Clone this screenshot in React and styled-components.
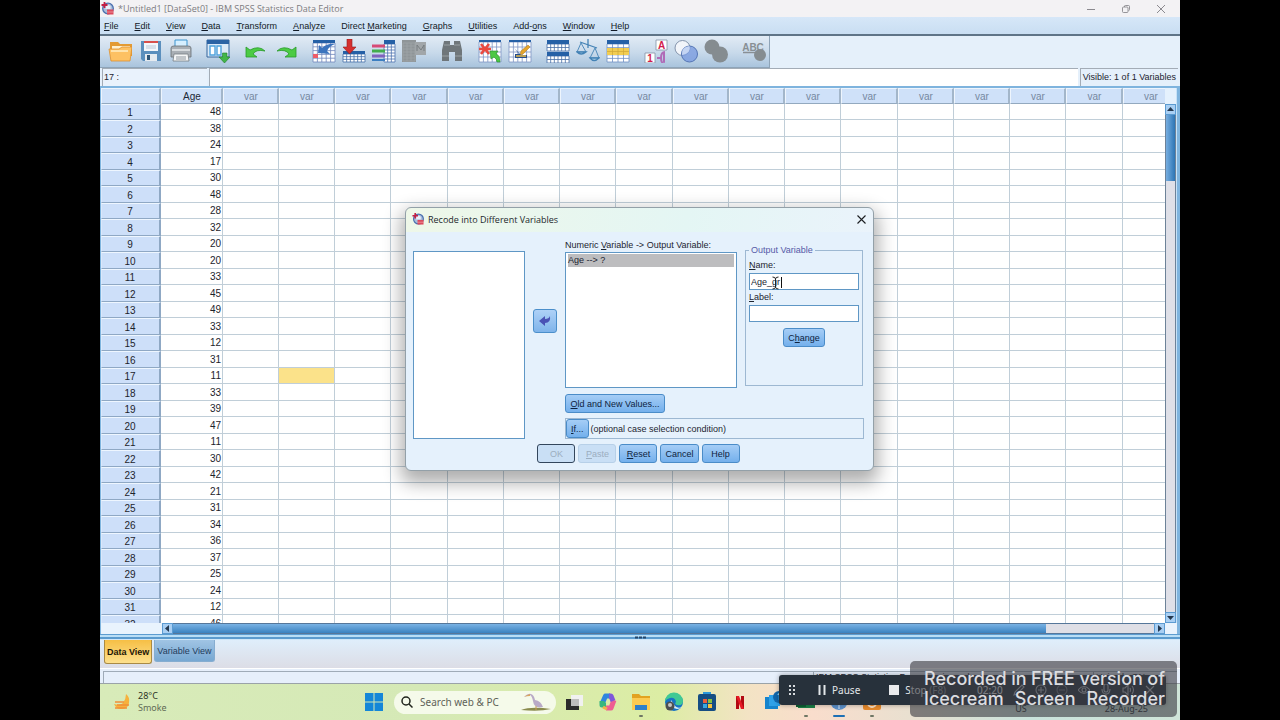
import React from "react";
import styled, { createGlobalStyle, css } from "styled-components";

const Global = createGlobalStyle`
  *, *::before, *::after { box-sizing: border-box; }
  html, body { margin: 0; background: #000; }
  body { font-family: "Liberation Sans", Arial, sans-serif; font-size: 9px; color: #1c2430; }
  button, input { font: inherit; color: inherit; margin: 0; padding: 0; border: 0; background: none; }
  svg { display: block; }
`;

const UI = `"Noto Sans", "Open Sans", sans-serif`;
const TITLE = `"Open Sans", "Noto Sans", sans-serif`;

const Screen = styled.div`
  height: 100vh;
  padding: 0 100px;
  background: #000;
`;
const Desktop = styled.div`
  position: relative;
  height: 100%;
  display: flex;
  flex-direction: column;
  overflow: hidden;
  background: #e6f1fb;
`;

/* ---------- application window ---------- */
const TitleBar = styled.header`
  display: flex;
  align-items: center;
  gap: 4px;
  height: 17px;
  padding: 0 13px 0 1px;
  background: #f3f2f4;
  color: #7c7b80;
  font-family: ${TITLE};
  font-size: 9px;
`;
const Title = styled.h1`
  flex: 1;
  margin: 0;
  font-size: inherit;
  font-weight: 400;
`;
const Controls = styled.div`
  display: flex;
  gap: 23px;
  color: #8b8a8f;
`;
const IconButton = styled.button`
  display: grid;
  place-items: center;
  width: ${(p) => p.$w || 12}px;
  height: ${(p) => p.$h || 12}px;
`;
const MenuBar = styled.nav`
  display: flex;
  gap: 16px;
  align-items: center;
  height: 19px;
  padding-left: 4px;
  background: linear-gradient(#d6e7f8, #c9def2);
  border-bottom: 2px solid #5f7487;
  color: #121a26;
`;
const MenuItem = styled.button`
  line-height: 16px;
`;
const ToolStrip = styled.div`
  display: flex;
  height: 32px;
  background: #e5f0fa;
`;
const ToolBar = styled.div`
  display: flex;
  align-items: center;
  gap: 14px;
  padding: 0 3px 2px 8px;
  background: linear-gradient(#e2ebf5, #c7d9ea 55%, #a9c4dd);
  border-right: 1px solid #8ea4b8;
  border-bottom: 1px solid #8ea4b8;
`;
const ToolGroup = styled.div`
  display: flex;
  gap: 6px;
`;
const InfoRow = styled.div`
  display: flex;
  height: 18px;
  padding: 0 2px;
  gap: 2px;
  background: #e5f0fb;
  line-height: 17px;
`;
const CellName = styled.output`
  width: 105px;
  padding-left: 1px;
  border: 1px solid #a3acb6;
  border-width: 1px 0 0 1px;
  background: #e9f2fc;
`;
const CellEditor = styled.input`
  flex: 1;
  min-width: 0;
  background: #fff;
  border: 1px solid #a3acb6;
  border-width: 1px 0 0 1px;
`;
const Visible = styled.span`
  padding: 0 2px 0 2px;
  border: 1px solid #a3acb6;
  border-width: 1px 0 0 1px;
`;

/* ---------- data grid ---------- */
const GridFrame = styled.main`
  flex: 1;
  min-height: 0;
  display: flex;
  flex-direction: column;
  border: solid #7fb4de;
  border-width: 2px 3px 0 1px;
  background: #fff;
`;
const GridBody = styled.div`
  flex: 1;
  min-height: 0;
  display: flex;
`;
const Viewport = styled.div`
  flex: 1;
  min-width: 0;
  overflow: hidden;
`;
const Sheet = styled.table`
  table-layout: fixed;
  width: 1078px;
  border-collapse: separate;
  border-spacing: 0;
  font-size: 10px;
  color: #1d242c;
`;
const ColHead = styled.th`
  height: 16px;
  padding: 1px 0 0 1px;
  line-height: 13px;
  font-weight: 400;
  color: ${(p) => (p.$named ? "#1d2836" : "#7688a0")};
  background: #cfe1f9;
  border: 1px solid #eef5fd;
  border-right: 2px solid #a3b6ca;
  border-bottom: 1px solid #93a9bf;
`;
const RowHead = styled.th`
  padding: 1px 1px 0 0;
  line-height: 13px;
  font-weight: 400;
  background: #cddff9;
  border: 1px solid #8fa8c4;
  border-top-color: #eef6ff;
  border-right-width: 2px;
  border-left-color: #dbe9fb;
`;
const Row = styled.tr`
  height: 16px;
  &:nth-child(even) { height: 17px; }
`;
const Cell = styled.td`
  padding: 1px 1px 0 0;
  line-height: 14px;
  text-align: right;
  border: solid #c0ced8;
  border-width: 0 1px 1px 0;
  background: ${(p) => (p.$active ? "#fbe28a" : "#fff")};
`;
const VBar = styled.div`
  display: flex;
  flex-direction: column;
  width: 12px;
  padding-top: 16px;
  background: #e5f1fd;
  border-right: 1px solid #c7e2f8;
`;
const Arrow = styled.button`
  display: grid;
  place-items: center;
  flex: none;
  width: 11px;
  height: 11px;
  background: #a9cff3;
  border: 1px solid #5c9bd1;
  color: #24384f;
`;
const VTrack = styled.div`
  flex: 1;
  background: #dfe0e8;
  border: 1px solid #6d8298;
  border-width: 0 1px;
`;
const VThumb = styled.div`
  height: 66px;
  background: linear-gradient(90deg, #77aee0, #2d75b5);
`;
const HRow = styled.div`
  display: flex;
  height: 11px;
  padding: 0 12px 0 61px;
  background: #e9f3fd;
`;
const HTrack = styled.div`
  flex: 1;
  background: #dfdfe6;
  border: 1px solid #56779a;
  border-width: 1px 0;
`;
const HThumb = styled.div`
  width: 89%;
  height: 100%;
  background: linear-gradient(#79b2e4, #3a82c0);
`;
const Splitter = styled.div`
  display: grid;
  place-items: center;
  height: 6px;
  background: linear-gradient(#5c9cd0 0 1px, #b9def6 1px 3px, #5b9bce 3px 5px, #cfe6f8 5px);
`;
const TabStrip = styled.div`
  display: flex;
  align-items: flex-start;
  gap: 2px;
  height: 28px;
  padding: 0 4px;
  background: linear-gradient(#dfeefb, #dcdde6);
`;
const Tab = styled.button`
  height: ${(p) => (p.$on ? 24 : 22)}px;
  padding: 0 2px;
  border: 1px solid ${(p) => (p.$on ? "#a98a45" : "#86add0")};
  border-top: 0;
  border-radius: 0 0 3px 3px;
  background: ${(p) => (p.$on ? "linear-gradient(#f6bf45, #fde08d)" : "linear-gradient(#a0c4e4, #78a8d2)")};
  color: ${(p) => (p.$on ? "#1d1608" : "#1f3c5c")};
  font-weight: ${(p) => (p.$on ? 700 : 400)};
`;
const StatusBar = styled.footer`
  display: flex;
  height: 16px;
  padding: 2px 3px 0;
  border-top: 1px solid #fff;
  border-bottom: 1px solid #9aa3a8;
  background: #e6effb;
`;
const StatusCell = styled.span`
  flex: ${(p) => p.$flex};
  padding-left: 2px;
  line-height: 11px;
  border: 1px solid #9fabb8;
  border-width: 1px 0 0 1px;
  white-space: nowrap;
  overflow: hidden;
`;

/* ---------- dialog ---------- */
const Dialog = styled.section`
  position: absolute;
  left: calc(50% - 235px);
  top: 207px;
  width: 469px;
  padding-bottom: 7px;
  border: 1px solid #93a0a8;
  border-radius: 6px;
  background: linear-gradient(100deg, #eef7e8, #e4f6f4 60%, #eaf3fb) top / 100% 24px no-repeat, #e5f1fc;
  box-shadow: 0 8px 18px 4px rgba(0, 0, 0, 0.32);
`;
const DialogTitle = styled.div`
  display: flex;
  align-items: center;
  gap: 4px;
  height: 22px;
  padding: 0 6px;
  color: #23282c;
  font-family: ${TITLE};
  font-size: 9px;
`;
const DialogMain = styled.div`
  display: flex;
  gap: 8px;
  padding: 9px 9px 0 7px;
`;
const SourceList = styled.div`
  width: 112px;
  margin-top: 12px;
  background: #fff;
  border: 1px solid #5f97c5;
`;
const MoveButton = styled.button`
  display: grid;
  place-items: center;
  align-self: center;
  width: 24px;
  height: 24px;
  margin-bottom: 36px;
  border: 1px solid #4b8fcb;
  border-radius: 3px;
  background: linear-gradient(#aed1f7, #7fb4ea);
  color: #4a52b5;
`;
const RightSide = styled.div`
  flex: 1;
  min-width: 0;
`;
const Targets = styled.div`
  display: flex;
  gap: 8px;
  height: 149px;
`;
const TargetCol = styled.div`
  display: flex;
  flex-direction: column;
  width: 172px;
  line-height: 13px;
  white-space: nowrap;
`;
const TargetList = styled.ul`
  flex: 1;
  margin: 0;
  padding: 1px 2px;
  list-style: none;
  background: #fff;
  border: 1px solid #5f97c5;
`;
const TargetItem = styled.li`
  background: #bdbdbf;
`;
const Output = styled.fieldset`
  width: 118px;
  min-width: 0;
  margin: 5px 0 2px;
  padding: 2px 3px 0 3px;
  border: 1px solid #9db8d2;
  display: flex;
  flex-direction: column;
`;
const Legend = styled.legend`
  padding: 0 2px;
  line-height: 12px;
  color: #565aa8;
`;
const FieldLabel = styled.label`
  line-height: 15px;
`;
const Field = styled.input`
  height: 17px;
  padding: 0 1px;
  background: #fff;
  border: 1px solid #5f97c5;
`;
const Button = styled.button`
  height: 19px;
  min-width: ${(p) => p.$min || 0}px;
  padding: 0 4px;
  border: 1px solid #4a8cc8;
  border-radius: 3px;
  background: linear-gradient(#a5cdf6, #74b0ec);
  color: #0e2340;
  white-space: nowrap;
  ${(p) => p.disabled && css`
    background: #c9dff5;
    border-color: #b7d0e8;
    color: #9caec0;
  `}
  ${(p) => p.$default && css`
    border-color: #33465c;
  `}
`;
const ChangeRow = styled.div`
  display: flex;
  justify-content: center;
  padding-top: 6px;
`;
const OldNewRow = styled.div`
  padding-top: 6px;
`;
const Condition = styled.div`
  display: flex;
  align-items: center;
  gap: 2px;
  height: 21px;
  margin-top: 5px;
  border: 1px solid #9db8d2;
`;
const DialogButtons = styled.div`
  display: flex;
  justify-content: center;
  gap: 3px;
  padding: 5px 2px 0 0;
`;
const TextCursor = styled.svg`
  position: absolute;
  left: 365px;
  top: 68px;
`;

/* ---------- task bar ---------- */
const TaskBar = styled.footer`
  display: flex;
  align-items: center;
  height: 36px;
  padding: 0 12px;
  background: linear-gradient(90deg, #d8ebb9 0%, #d5e9b6 30%, #dceda4 52%, #f3e3c4 60%, #f9ddcc 66%, #e9e0d0 75%, #c9e3dc 86%, #cfe5d8 100%);
  font-family: ${UI};
`;
const Weather = styled.button`
  display: flex;
  align-items: center;
  gap: 6px;
  width: 251px;
  text-align: left;
  line-height: 12px;
  color: #2c3325;
`;
const Sub = styled.span`
  display: block;
  color: #616a56;
`;
const Apps = styled.div`
  flex: 1;
  display: flex;
  align-items: center;
  gap: 11px;
`;
const Search = styled.label`
  display: flex;
  align-items: center;
  gap: 7px;
  width: 162px;
  height: 23px;
  padding: 0 5px 0 7px;
  margin: 0 -3px 0 -2px;
  border-radius: 12px;
  background: #f5faea;
`;
const SearchInput = styled.input`
  flex: 1;
  min-width: 0;
  font-size: 10px;
  &::placeholder { color: #5e6258; opacity: 1; }
`;
const AppButton = styled.button`
  position: relative;
  width: 22px;
  height: 28px;
  display: grid;
  place-items: center;
  &::after {
    content: "";
    position: absolute;
    bottom: -1px;
    left: calc(50% - ${(p) => (p.$run === "active" ? 6 : 2)}px);
    width: ${(p) => (p.$run === "active" ? 12 : 4)}px;
    height: 2px;
    border-radius: 1px;
    background: ${(p) => (p.$run === "active" ? "#1c6fb5" : p.$run ? "#6f7765" : "transparent")};
  }
`;
const Tray = styled.div`
  display: flex;
  align-items: flex-end;
  gap: 78px;
  height: 25px;
  padding-right: 20px;
  line-height: 12px;
  color: #20262a;
`;

/* ---------- recorder overlay ---------- */
const Recorder = styled.aside`
  position: absolute;
  right: 14px;
  bottom: 15px;
  width: 387px;
  height: 30px;
  display: flex;
  align-items: center;
  padding: 0 10px;
  border-radius: 3px;
  background: #27313b;
  box-shadow: 0 0 5px rgba(0, 0, 0, 0.35);
  color: #e3e7ea;
  font-family: ${UI};
  font-size: 10px;
`;
const RecButton = styled.button`
  display: flex;
  align-items: center;
  gap: 6px;
  margin-left: ${(p) => p.$gap}px;
`;
const Dim = styled.span`
  color: #8b939a;
`;
const RecTime = styled.time`
  margin-left: 31px;
`;
const RecTools = styled.div`
  display: flex;
  flex: 1;
  justify-content: space-between;
  margin-left: 10px;
`;
const Watermark = styled.p`
  position: absolute;
  right: 3px;
  bottom: 3px;
  width: 267px;
  margin: 0;
  padding: 8px 12px 8px 14px;
  border-radius: 5px;
  background: rgba(62, 62, 68, 0.62);
  color: #dcdde0;
  font-family: Inter, sans-serif;
  font-size: 18px;
  font-weight: 500;
  line-height: 20px;
`;
const MarkLine = styled.span`
  display: flex;
  justify-content: space-between;
  white-space: nowrap;
`;

/* ---------- drawings ---------- */
const SpssLogo = ({ size = 13 }) => (
  <svg width={size} height={size} viewBox="0 0 13 13">
    <circle cx="7" cy="6.500" r="5.300" fill="#a9bedd" stroke="#4a6fae" strokeWidth="1.300" />
    <path d="M4.500 4q2-2 5 0v3h-5z" fill="#e8eff8" />
    <path d="M3.500 0v6M.5 3h6" stroke="#c41f45" strokeWidth="1.800" />
    <rect x="6" y="7.500" width="6.500" height="5" fill="#dc4a5c" />
    <path d="M6 10h6.500" stroke="#f0b9c1" strokeWidth=".6" />
  </svg>
);
const Lines = ({ x, y, w, h, n = 4, m = 4, color = "#8fa6d0" }) => {
  const d = [];
  for (let i = 0; i <= n; i++) d.push(`M${x + (w * i) / n} ${y}v${h}`);
  for (let j = 0; j <= m; j++) d.push(`M${x} ${y + (h * j) / m}h${w}`);
  return <path d={d.join("")} stroke={color} strokeWidth=".8" fill="none" />;
};
const GridBase = ({ x = 1, y = 1, w = 22, h = 22, head = 4, n = 5, m = 4, line }) => (
  <g>
    <rect x={x} y={y} width={w} height={h} fill="#fff" />
    <Lines x={x} y={y + head} w={w} h={h - head} n={n} m={m} color={line} />
    <rect x={x} y={y} width={w} height={head} fill="#2560a6" />
  </g>
);
const icons = {
  "Open data document": (
    <g>
      <path d="M2 3h8l2 2h12v12H2z" fill="#e39a33" />
      <path d="M4 7h18v5H4z" fill="#fff1cf" />
      <path d="M1 10h10l3-2h10l-2 14H3z" fill="#fdc163" stroke="#dd9130" strokeWidth=".8" />
      <path d="M3 12h17" stroke="#ffe3ab" strokeWidth="2" />
    </g>
  ),
  "Save this document": (
    <g>
      <path d="M3 2h20v20H5l-2-2z" fill="#5b8fbd" />
      <path d="M6 2h14v10H6z" fill="#f3f6fa" />
      <path d="M6 2h14v2H6z" fill="#d8504c" />
      <path d="M8 7h10M8 9h10" stroke="#b9c8d8" />
      <path d="M7 15h12v7H7z" fill="#e6ebf0" />
      <path d="M9 16h3v5H9z" fill="#2f5678" />
    </g>
  ),
  Print: (
    <g>
      <path d="M7 1h12v9H7z" fill="#d6efff" stroke="#3b94cf" />
      <path d="M3 9q0-2 3-2h14q3 0 3 2v9H3z" fill="#a9afb5" stroke="#686e74" strokeWidth=".8" />
      <path d="M4 11h18" stroke="#e8ebee" strokeWidth="1.500" />
      <path d="M6 15h14l1 7H5z" fill="#f4f5f6" stroke="#777d83" strokeWidth=".8" />
      <path d="M8 18h10M8 20h10" stroke="#8f979e" />
    </g>
  ),
  "Recall recently used dialogs": (
    <g>
      <path d="M1 1h22v17H1z" fill="#dbe9f7" stroke="#32659c" />
      <path d="M1 1h22v4H1z" fill="#2b63a4" />
      <path d="M4 7h5v9H4zM11 7h4v9h-4z" fill="#fff" stroke="#4fa2dc" strokeWidth="1.400" />
      <path d="M16.500 14h4.500v4h3l-5.500 6-5.500-6h3.500z" fill="#43b649" stroke="#227c2c" strokeWidth=".6" />
    </g>
  ),
  Undo: <path d="M2 8v10h11l-4-3q3-5 12-3-6-6-15-1z" fill="#4ccb44" stroke="#2a9a2c" strokeWidth=".8" />,
  Redo: <path d="M22 8v10H11l4-3q-3-5-12-3 6-6 15-1z" fill="#4ccb44" stroke="#2a9a2c" strokeWidth=".8" />,
  "Go to case": (
    <g>
      <GridBase head={3} n={5} m={5} line="#7087bb" />
      <rect x="1" y="15" width="5" height="4" fill="#ee5c68" />
      <path d="M6 14l1-8 3 3q6-5 13-4-6 2-8 7l3 3z" fill="#3b73bd" />
    </g>
  ),
  "Go to variable": (
    <g>
      <GridBase y={12} h={11} head={3} n={6} m={3} line="#446fa8" />
      <path d="M5 0h5v8h4l-6.500 7L1 8h4z" fill="#d52f2f" stroke="#941c1c" strokeWidth=".6" />
    </g>
  ),
  Variables: (
    <g>
      <GridBase x={12} w={11} n={3} m={6} line="#4c72ae" />
      <path d="M0 7h13" stroke="#d64b77" strokeWidth="3" />
      <path d="M0 12h13" stroke="#43ad4d" strokeWidth="3" />
      <path d="M0 17h13" stroke="#8163bd" strokeWidth="3" />
      <path d="M0 21h13" stroke="#3c7fc2" strokeWidth="2" />
    </g>
  ),
  "Run descriptive statistics": (
    <g>
      <path d="M0 1h14v22H0z" fill="#8f9598" />
      <path d="M13 3h11v13H13z" fill="#a1a6a9" />
      <Lines x={1} y={4} w={12} h={18} n={3} m={6} color="#9ea4a7" />
      <path d="M15 12V6l4 5 3-5v6" stroke="#777d80" fill="none" />
    </g>
  ),
  Find: (
    <g fill="#6f767a">
      <path d="M4 2h6v4h4V2h6l2 9v11h-7v-9H9v9H2V11z" />
      <path d="M4 6h6M14 6h6M2 17h7M15 17h7" stroke="#9aa0a3" />
    </g>
  ),
  "Insert cases": (
    <g>
      <GridBase head={2} line="#7d95c4" />
      <path d="M1 10h12M3 5l8 10M11 5L3 15" stroke="#ea4a40" strokeWidth="2.600" />
      <path d="M12 12l1 8 3-2q3 2 3 5h3q0-7-4-8l2-3z" fill="#4cc845" stroke="#279129" strokeWidth=".6" />
    </g>
  ),
  "Insert variable": (
    <g>
      <GridBase head={2} line="#7d95c4" />
      <path d="M13 12l7-6 2 2-7 7-3 1z" fill="#e6a62c" stroke="#a8741b" strokeWidth=".5" />
      <path d="M6 9l5 6H7v4h12v-3h-6z" fill="#254d8d" />
      <path d="M8 17h10" stroke="#e9bd4a" strokeWidth="1.500" />
    </g>
  ),
  "Split file": (
    <g>
      <GridBase h={11} n={6} m={2} line="#4970a7" />
      <GridBase y={13} h={11} n={6} m={2} line="#4970a7" />
    </g>
  ),
  "Weight cases": (
    <g fill="none" stroke="#4382b5" strokeWidth="1.300">
      <path d="M4 3l17 6M12 0v9" />
      <path d="M5 4L1 13h9zM19 9l-5 10h9z" strokeWidth=".9" />
      <path d="M1 13q4 4 9 0zM14 19q4 5 9 0z" fill="#b9d8ef" />
    </g>
  ),
  "Select cases": (
    <g>
      <GridBase n={4} m={5} line="#6f8fc4" />
      <rect x="1" y="9" width="22" height="7" fill="#f2cd52" />
      <path d="M1 12.500h22M6.500 9v7M12 9v7M17.500 9v7" stroke="#cfa637" strokeWidth=".7" />
    </g>
  ),
  "Value labels": (
    <g>
      <path d="M12 1h11v10H12zM1 14h10v10H1z" fill="#fff" stroke="#8492a4" strokeWidth=".8" />
      <text x="17.500" y="10" textAnchor="middle" fontSize="10" fontWeight="700" fill="#d31c4c">A</text>
      <text x="6" y="22.500" textAnchor="middle" fontSize="10" fontWeight="700" fill="#d31c4c">1</text>
      <path d="M13 19h4M21 13q-4 0-4 6t4 5M20 14v9" stroke="#b06bb7" strokeWidth="2" fill="none" />
    </g>
  ),
  "Use variable sets": (
    <g strokeWidth="1">
      <circle cx="8.500" cy="9" r="7.500" fill="#f2f5fa" stroke="#8494ac" />
      <circle cx="15.500" cy="15" r="8" fill="#7c9ce0" fillOpacity=".8" stroke="#5576b5" />
      <path d="M8 16Q7 8 15.500 7q2 7-7.500 9z" fill="#c5d5f3" />
    </g>
  ),
  "Show all variables": (
    <g fill="#858c90">
      <circle cx="8" cy="8" r="7.500" />
      <circle cx="16" cy="15.500" r="8" />
    </g>
  ),
  "Spell check": (
    <g>
      <text x="11" y="12" textAnchor="middle" fontSize="10" fontWeight="700" fill="#888f94">ABC</text>
      <path d="M1 13.500h13" stroke="#888f94" strokeWidth="1.500" />
      <circle cx="18" cy="16" r="6" fill="#858c90" />
    </g>
  ),
};
const groups = [
  ["Open data document", "Save this document", "Print"],
  ["Recall recently used dialogs"],
  ["Undo", "Redo"],
  ["Go to case", "Go to variable", "Variables", "Run descriptive statistics"],
  ["Find"],
  ["Insert cases", "Insert variable"],
  ["Split file", "Weight cases", "Select cases"],
  ["Value labels", "Use variable sets", "Show all variables"],
  ["Spell check"],
];
const Tri = ({ dir }) => (
  <svg width="7" height="7" viewBox="0 0 7 7">
    <path d="M0 5l3.500-4L7 5z" fill="currentColor" transform={`rotate(${dir} 3.500 3.500)`} />
  </svg>
);

const taskApps = [
  ["Task view", null, <g><path d="M2 8h13v11H2z" fill="#2b2b2b" /><path d="M7 4h12v11H7z" fill="#f1f1f1" /><path d="M7 8h8v7H7z" fill="#bdbdbd" /></g>],
  ["Copilot", null, (
    <g fill="none" strokeWidth="5" strokeLinejoin="round">
      <path d="M13 5H8.500L5 13" stroke="#2e86de" />
      <path d="M5 10v4h4" stroke="#39b77d" />
      <path d="M9 17h5l3-8" stroke="#ee5f92" />
      <path d="M12 5h2l2 5" stroke="#7f57d9" />
      <path d="M6 16l4 2" stroke="#f2b04a" strokeWidth="3" />
    </g>
  )],
  ["File Explorer", "idle", <g><path d="M2 3h7l2 2h9v14H2z" fill="#e2a321" /><path d="M2 7h18v12H2z" fill="#fccb52" /><path d="M5 14h12v5H5z" fill="#2f7fca" /></g>],
  ["Microsoft Edge", null, (
    <g>
      <circle cx="11" cy="11" r="9" fill="#1673c4" />
      <path d="M2 11a9 9 0 0118-1q0 5-6 4-3-1-1-3-1-5-6-4-4 1-5 4z" fill="#3fc994" />
      <path d="M8 9q-2 8 6 9 3 0 5-2-4 2-7-1-2-3-4-6z" fill="#d9effa" />
      <circle cx="7" cy="15" r="4.500" fill="#4d5052" /><circle cx="7" cy="14" r="2" fill="#c5c5c5" />
    </g>
  )],
  ["Microsoft Store", null, <g><path d="M8 5V2h6v3" stroke="#2d98da" strokeWidth="2" fill="none" /><rect x="2" y="3" width="18" height="17" rx="2" fill="#164e83" /><path d="M7 8h4v4H7z" fill="#ec5f3a" /><path d="M12 8h4v4h-4z" fill="#87c342" /><path d="M7 13h4v4H7z" fill="#38a8e0" /><path d="M12 13h4v4h-4z" fill="#f8c33b" /></g>],
  ["Netflix", null, <g><path d="M7 5h3v13H7zM12 5h3v13h-3z" fill="#b30912" /><path d="M7 5h3l5 13h-3z" fill="#e61a25" /></g>],
  ["Phone Link", null, <g><path d="M3 6h13v12H3z" fill="#1684cd" /><path d="M7 4h11v11H7z" fill="#2fa1e8" /><circle cx="17" cy="6" r="6" fill="#1267ac" /><text x="17" y="9" fontSize="8" textAnchor="middle" fill="#fff">1</text></g>],
  ["Excel", "idle", <g><path d="M3 3h17v14H3z" fill="#1a7f46" /><path d="M1 7h10v9H1z" fill="#0f5f34" /></g>],
  ["SPSS", "active", <g><circle cx="11" cy="10" r="9" fill="#5b8fc9" /><path d="M11 2v16M3 11h16" stroke="#dce8f5" /></g>],
  ["Recorder", "idle", <g><rect x="2" y="2" width="18" height="17" rx="2" fill="#e5892c" /><circle cx="11" cy="12" r="4" fill="none" stroke="#fbe3c8" strokeWidth="2" /></g>],
];

const menus = [["", "F", "ile"], ["", "E", "dit"], ["", "V", "iew"], ["", "D", "ata"], ["", "T", "ransform"], ["", "A", "nalyze"], ["Direct ", "M", "arketing"], ["", "G", "raphs"], ["", "U", "tilities"], ["Add-", "o", "ns"], ["", "W", "indow"], ["", "H", "elp"]];
const ages = [48, 38, 24, 17, 30, 48, 28, 32, 20, 20, 33, 45, 49, 33, 12, 31, 11, 33, 39, 47, 11, 30, 42, 21, 31, 34, 36, 37, 25, 24, 12, 46];
const vars = Array.from({ length: 17 }, (_, i) => i);

const Mnemonic = ({ parts }) => <>{parts[0]}<u>{parts[1]}</u>{parts[2]}</>;

const RecodeDialog = () => (
  <Dialog role="dialog" aria-labelledby="recode-title">
    <DialogTitle>
      <SpssLogo size={12} />
      <Title as="h2" id="recode-title">Recode into Different Variables</Title>
      <IconButton aria-label="Close dialog">
        <svg width="9" height="9" viewBox="0 0 9 9"><path d="M.5.5l8 8M8.500.5l-8 8" stroke="#1c1f22" strokeWidth="1.100" /></svg>
      </IconButton>
    </DialogTitle>
    <DialogMain>
      <SourceList role="listbox" aria-label="Source variables" />
      <MoveButton aria-label="Move variable">
        <svg width="12" height="12" viewBox="0 0 12 12"><path d="M0 6l6-5v3q4 0 5-3 1 7-5 7v3z" fill="currentColor" /></svg>
      </MoveButton>
      <RightSide>
        <Targets>
          <TargetCol>
            <span><Mnemonic parts={["Numeric ", "V", "ariable -> Output Variable:"]} /></span>
            <TargetList><TargetItem>Age --&gt; ?</TargetItem></TargetList>
          </TargetCol>
          <Output>
            <Legend>Output Variable</Legend>
            <FieldLabel htmlFor="out-name"><u>N</u>ame:</FieldLabel>
            <Field id="out-name" defaultValue="Age_gr" />
            <FieldLabel htmlFor="out-label"><u>L</u>abel:</FieldLabel>
            <Field id="out-label" />
            <ChangeRow><Button $min={42}><Mnemonic parts={["C", "h", "ange"]} /></Button></ChangeRow>
          </Output>
        </Targets>
        <OldNewRow><Button $min={100}><u>O</u>ld and New Values...</Button></OldNewRow>
        <Condition>
          <Button><u>I</u>f...</Button>
          <span>(optional case selection condition)</span>
        </Condition>
      </RightSide>
    </DialogMain>
    <DialogButtons>
      <Button disabled $default $min={38}>OK</Button>
      <Button disabled $min={38}><u>P</u>aste</Button>
      <Button $min={38}><u>R</u>eset</Button>
      <Button $min={38}>Cancel</Button>
      <Button $min={38}>Help</Button>
    </DialogButtons>
    <TextCursor width="12" height="14" viewBox="0 0 12 14" aria-hidden="true">
      <path d="M1.500 1q3 0 3 2v8q0 2-3 2M7.500 1q-3 0-3 2v8q0 2 3 2" stroke="#222" fill="none" />
      <path d="M10.500 1v11" stroke="#111" />
    </TextCursor>
  </Dialog>
);

const outline = { fill: "none", stroke: "#aab1b7", strokeWidth: 1.1 };

export default function App() {
  return (
    <Screen>
      <Global />
      <Desktop>
        <TitleBar>
          <SpssLogo />
          <Title>*Untitled1 [DataSet0] - IBM SPSS Statistics Data Editor</Title>
          <Controls>
            <IconButton aria-label="Minimize"><svg width="8" height="8"><path d="M0 4.500h8" stroke="currentColor" /></svg></IconButton>
            <IconButton aria-label="Restore">
              <svg width="8" height="8" viewBox="0 0 8 8" fill="none" stroke="currentColor" strokeWidth=".9"><rect x=".5" y="2" width="5.500" height="5.500" rx="1" /><path d="M2.500 2V1q0-.5 1-.5h3q1 0 1 1v3q0 1-1 1" /></svg>
            </IconButton>
            <IconButton aria-label="Close"><svg width="8" height="8"><path d="M0 0l8 8M8 0L0 8" stroke="currentColor" /></svg></IconButton>
          </Controls>
        </TitleBar>
        <MenuBar>
          {menus.map((m) => <MenuItem key={m.join("")}><Mnemonic parts={m} /></MenuItem>)}
        </MenuBar>
        <ToolStrip>
          <ToolBar>
            {groups.map((g) => (
              <ToolGroup key={g[0]}>
                {g.map((name) => (
                  <IconButton key={name} $w={24} $h={24} aria-label={name}>
                    <svg width="24" height="24" viewBox="0 0 24 24">{icons[name]}</svg>
                  </IconButton>
                ))}
              </ToolGroup>
            ))}
          </ToolBar>
        </ToolStrip>
        <InfoRow>
          <CellName>17 :</CellName>
          <CellEditor aria-label="Cell value" />
          <Visible>Visible: 1 of 1 Variables</Visible>
        </InfoRow>
        <GridFrame>
          <GridBody>
            <Viewport>
              <Sheet>
                <colgroup>
                  <col width="60" />
                  <col width="62" />
                  {vars.map((v) => <col key={v} width={v % 4 === 3 ? 57 : 56} />)}
                </colgroup>
                <thead>
                  <tr>
                    <ColHead aria-label="Case" />
                    <ColHead $named>Age</ColHead>
                    {vars.map((v) => <ColHead key={v}>var</ColHead>)}
                  </tr>
                </thead>
                <tbody>
                  {ages.map((age, i) => (
                    <Row key={i}>
                      <RowHead scope="row">{i + 1}</RowHead>
                      <Cell>{age}</Cell>
                      {vars.map((v) => <Cell key={v} $active={i === 16 && v === 1} />)}
                    </Row>
                  ))}
                </tbody>
              </Sheet>
            </Viewport>
            <VBar>
              <Arrow aria-label="Scroll up"><Tri dir={0} /></Arrow>
              <VTrack><VThumb /></VTrack>
              <Arrow aria-label="Scroll down"><Tri dir={180} /></Arrow>
            </VBar>
          </GridBody>
          <HRow>
            <Arrow aria-label="Scroll left"><Tri dir={270} /></Arrow>
            <HTrack><HThumb /></HTrack>
            <Arrow aria-label="Scroll right"><Tri dir={90} /></Arrow>
          </HRow>
        </GridFrame>
        <Splitter>
          <svg width="11" height="3"><path d="M0 1.500h3M4 1.500h3M8 1.500h3" stroke="#24476b" strokeWidth="2" /></svg>
        </Splitter>
        <TabStrip>
          <Tab $on>Data View</Tab>
          <Tab>Variable View</Tab>
        </TabStrip>
        <StatusBar>
          <StatusCell $flex="2" />
          <StatusCell $flex="0 0 280px">IBM SPSS Statistics Processor is ready</StatusCell>
          <StatusCell $flex="0 0 84px">Unicode:ON</StatusCell>
        </StatusBar>
        <TaskBar>
          <Weather>
            <svg width="20" height="20" viewBox="0 0 20 20">
              <path d="M14 2q4 3 3 9-1 6-8 6-5 0-7-5 6 2 9-1 3-4 3-9z" fill="#f6b13d" />
              <path d="M3 10h9M5 13h12M3 16h12" stroke="#ef8f3a" strokeWidth="1.600" />
            </svg>
            <span>28°C<Sub>Smoke</Sub></span>
          </Weather>
          <Apps>
            <AppButton aria-label="Start">
              <svg width="18" height="18" viewBox="0 0 18 18"><path d="M0 0h8.500v8.500H0zM9.500 0H18v8.500H9.500zM0 9.500h8.500V18H0zM9.500 9.500H18V18H9.500z" fill="#1487d8" /></svg>
            </AppButton>
            <Search>
              <svg width="12" height="12" viewBox="0 0 12 12" fill="none" stroke="#20241c" strokeWidth="1.500"><circle cx="5" cy="5" r="4" /><path d="M8 8l3.500 3.500" /></svg>
              <SearchInput placeholder="Search web & PC" aria-label="Search web & PC" />
              <svg width="30" height="20" viewBox="0 0 30 20">
                <path d="M0 18q10-4 30-1-12 3-30 1z" fill="#8a8b4d" />
                <path d="M12 9q-1-5-3-6l-6 2q4-4 7-3 3 1 4 6 6 1 8 7-9 2-10-6z" fill="#b9aac6" />
                <path d="M3 4.500L9 2v2z" fill="#dba55c" />
                <path d="M15 14v4" stroke="#c99a5b" />
              </svg>
            </Search>
            {taskApps.map(([name, run, art]) => (
              <AppButton key={name} $run={run} aria-label={name}>
                <svg width="22" height="22" viewBox="0 0 22 22">{art}</svg>
              </AppButton>
            ))}
          </Apps>
          <Tray><span>US</span><time>28-Aug-25</time></Tray>
        </TaskBar>

        <RecodeDialog />

        <Recorder aria-label="Screen recorder">
          <svg width="6" height="10" viewBox="0 0 6 10" fill="#d7dbde"><path d="M0 0h2v2H0zM4 0h2v2H4zM0 4h2v2H0zM4 4h2v2H4zM0 8h2v2H0zM4 8h2v2H4z" /></svg>
          <RecButton $gap={23}>
            <svg width="8" height="10"><path d="M1.500 0v10M6.500 0v10" stroke="#e3e7ea" strokeWidth="2" /></svg>
            Pause
          </RecButton>
          <RecButton $gap={29}>
            <svg width="10" height="10"><path d="M0 0h10v10H0z" fill="#e8eaec" /></svg>
            <span>Stop <Dim>(F8)</Dim></span>
          </RecButton>
          <RecTime>02:20</RecTime>
          <RecTools>
            <IconButton aria-label="Draw"><svg width="12" height="12" viewBox="0 0 12 12" {...outline}><path d="M1 11l1-3 7-7 2 2-7 7z" /></svg></IconButton>
            <IconButton aria-label="Zoom in"><svg width="12" height="12" viewBox="0 0 12 12" {...outline}><circle cx="6" cy="6" r="5" /><path d="M6 3v6M3 6h6" /></svg></IconButton>
            <IconButton aria-label="Zoom out"><svg width="12" height="12" viewBox="0 0 12 12" {...outline} stroke="#687078"><circle cx="6" cy="6" r="5" /><path d="M3 6h6" /></svg></IconButton>
            <IconButton aria-label="Webcam"><svg width="12" height="12" viewBox="0 0 12 12" {...outline}><path d="M0 6q6-7 12 0-6 7-12 0z" /><circle cx="6" cy="6" r="2" /></svg></IconButton>
            <IconButton aria-label="Microphone"><svg width="12" height="12" viewBox="0 0 12 12" {...outline}><rect x="4" y="0" width="4" height="8" rx="2" /><path d="M2 5q0 5 4 5t4-5M6 10v2" /></svg></IconButton>
            <IconButton aria-label="Sound"><svg width="12" height="12" viewBox="0 0 12 12" {...outline}><path d="M1 4h2l3-3v10L3 8H1zM8 4q1 2 0 4M10 2q3 4 0 8" /></svg></IconButton>
            <IconButton aria-label="Close recorder"><svg width="12" height="12" viewBox="0 0 12 12" {...outline}><path d="M2 2l8 8M10 2l-8 8" /></svg></IconButton>
          </RecTools>
        </Recorder>
        <Watermark>
          <MarkLine><span>Recorded</span><span>in</span><span>FREE</span><span>version</span><span>of</span></MarkLine>
          <MarkLine><span>Icecream</span><span>Screen</span><span>Recorder</span></MarkLine>
        </Watermark>
      </Desktop>
    </Screen>
  );
}
